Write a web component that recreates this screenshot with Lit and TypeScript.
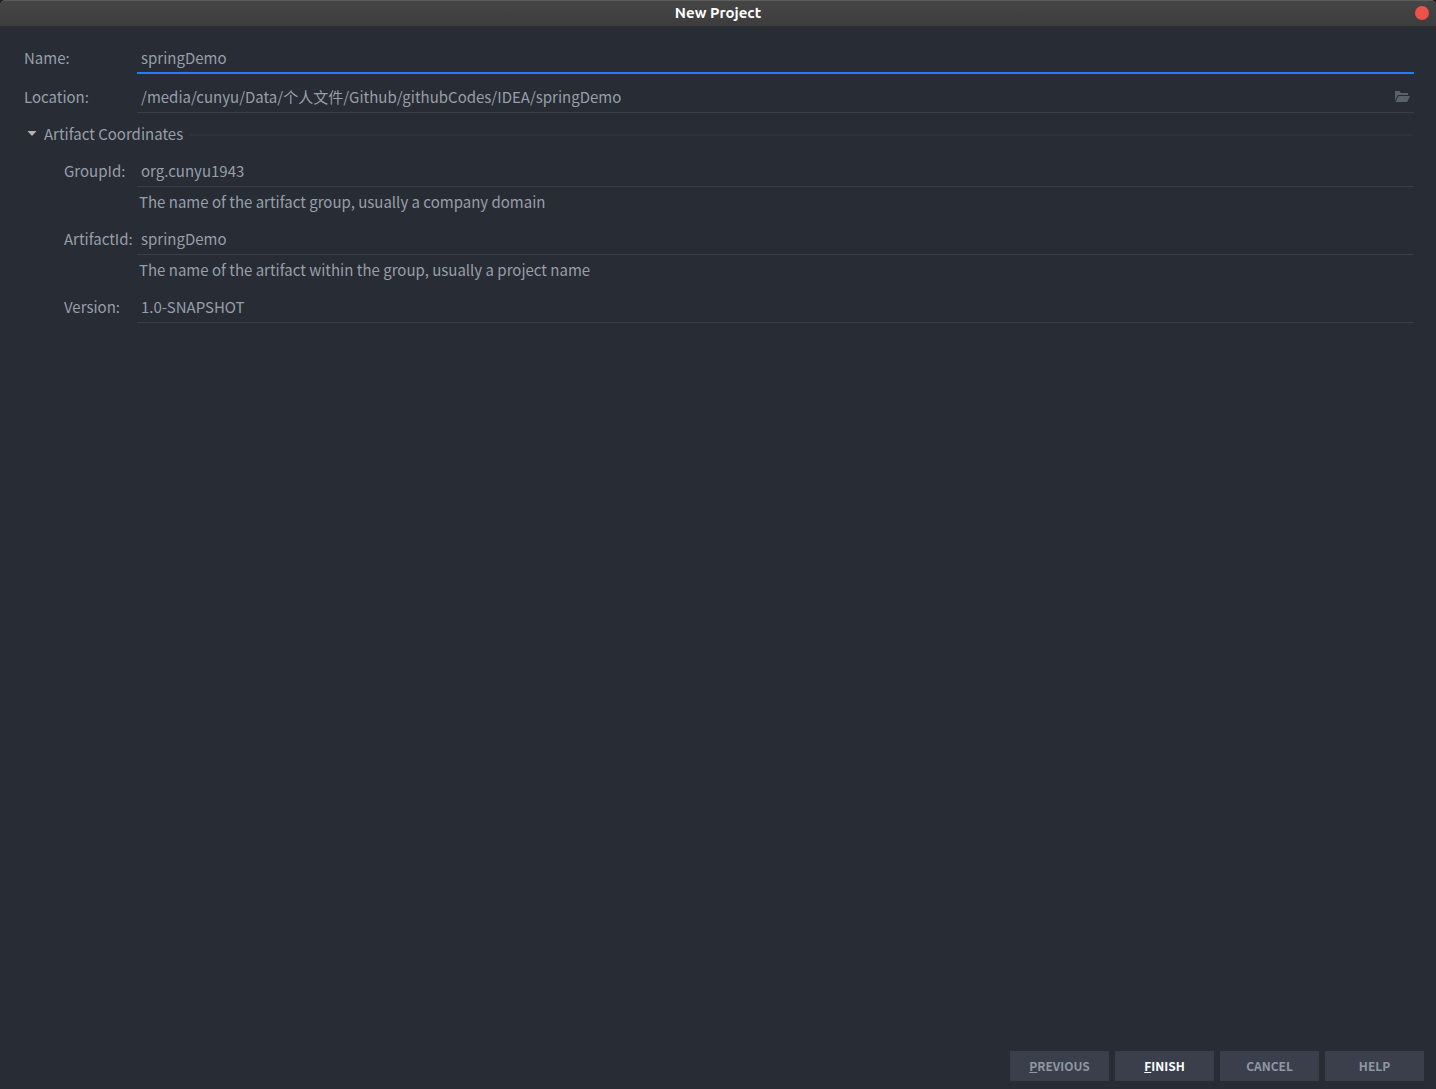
import { LitElement, html, css, nothing } from "lit";
import { customElement, property, state } from "lit/decorators.js";

interface Field {
  id: string;
  label: string;
  value: string;
  hint?: string;
}

const projectFields: Field[] = [
  { id: "name", label: "Name:", value: "springDemo" },
  { id: "location", label: "Location:", value: "/media/cunyu/Data/个人文件/Github/githubCodes/IDEA/springDemo" },
];

const artifactFields: Field[] = [
  { id: "group", label: "GroupId:", value: "org.cunyu1943", hint: "The name of the artifact group, usually a company domain" },
  { id: "artifact", label: "ArtifactId:", value: "springDemo", hint: "The name of the artifact within the group, usually a project name" },
  { id: "version", label: "Version:", value: "1.0-SNAPSHOT" },
];

@customElement("title-bar")
class TitleBar extends LitElement {
  static styles = css`
    :host {
      display: block;
      background: #1c1c1c;
    }
    .bar {
      display: grid;
      grid-template-columns: 1fr auto 1fr;
      align-items: center;
      height: 26px;
      box-sizing: border-box;
      padding: 0 7px 1px;
      border-top: 1px solid #5c5c5a;
      border-radius: 5px 5px 0 0;
      background: linear-gradient(#454545, #3d3d3d);
    }
    .title {
      grid-column: 2;
      margin: 0;
      color: #ffffff;
      font: bold 15px/24px "Ubuntu", "Noto Sans", sans-serif;
    }
    .close {
      justify-self: end;
      width: 14px;
      height: 14px;
      padding: 0;
      border: 0;
      border-radius: 50%;
      background: #ea524a;
    }
  `;

  @property() heading = "";

  render() {
    return html`
      <header class="bar">
        <h1 class="title">${this.heading}</h1>
        <button class="close" type="button" aria-label="Close"></button>
      </header>
    `;
  }
}

@customElement("app-root")
class AppRoot extends LitElement {
  static styles = css`
    :host {
      display: flex;
      flex-direction: column;
      min-height: 100vh;
      background: #282c34;
      color: #979faa;
      font: 15px/20px "Noto Sans CJK SC", sans-serif;
    }
    .form {
      flex: 1;
      display: flex;
      flex-direction: column;
      padding: 17px 22px 0 24px;
    }
    .group {
      display: grid;
      grid-template-columns: 113px 1fr;
      row-gap: 8px;
    }
    .nested {
      row-gap: 6px;
      grid-template-columns: 73px 1fr;
      padding-left: 40px;
    }
    .label {
      align-self: center;
      padding-bottom: 1px;
    }
    .field {
      display: flex;
      align-items: center;
      height: 31px;
      box-sizing: border-box;
      padding: 0 4px 1px;
      border-bottom: 1px solid #3a3f4b;
    }
    .field.active {
      padding-bottom: 0;
      border-bottom: 2px solid #2979ff;
    }
    .input {
      flex: 1;
      min-width: 0;
      height: 24px;
      padding: 0;
      border: 0;
      outline: 0;
      background: none;
      color: inherit;
      font: inherit;
    }
    .browse {
      display: flex;
      padding: 0;
      border: 0;
      background: none;
    }
    .hint {
      grid-column: 2;
      margin: -6px 0 0 2px;
      padding: 5px 0 6px;
    }
    .section {
      display: flex;
      align-items: center;
      gap: 6px;
      height: 42px;
      padding: 0 2px 1px 0;
    }
    .toggle {
      display: flex;
      align-items: center;
      gap: 7px;
      padding: 0 0 0 3px;
      border: 0;
      background: none;
      color: inherit;
      font: inherit;
    }
    .rule {
      flex: 1;
      height: 2px;
      margin-top: 2px;
      background: #2e323c;
    }
    .actions {
      display: flex;
      justify-content: flex-end;
      gap: 6px;
      padding: 8px 12px;
    }
    .action {
      min-width: 99px;
      height: 30px;
      padding: 0 12px;
      border: 0;
      background: #3a3f4b;
      color: #8f97a4;
      font: bold 12px/20px "Noto Sans CJK SC", sans-serif;
    }
    .primary {
      color: #ffffff;
    }
    .key {
      text-decoration: underline;
      text-underline-offset: 1px;
    }
  `;

  @state() private active = "name";
  @state() private expanded = true;

  private renderField(field: Field) {
    return html`
      <label class="label" for=${field.id}>${field.label}</label>
      <div class="field ${this.active === field.id ? "active" : ""}">
        <input class="input" id=${field.id} type="text" spellcheck="false" .value=${field.value}
          @focus=${() => (this.active = field.id)} />
        ${field.id === "location"
          ? html`<button class="browse" type="button" aria-label="Browse">
              <svg width="16" height="16" viewBox="0 0 16 16" fill="#59626b">
                <path d="M1 2h4.500l1.500 2H14V6H4L1 11.500z" />
                <path d="M4.600 7H16l-2.800 6H1.400z" />
              </svg>
            </button>`
          : nothing}
      </div>
      ${field.hint ? html`<div class="hint">${field.hint}</div>` : nothing}
    `;
  }

  render() {
    return html`
      <title-bar heading="New Project"></title-bar>
      <main class="form">
        <div class="group">${projectFields.map((f) => this.renderField(f))}</div>
        <div class="section">
          <button class="toggle" type="button" aria-expanded=${this.expanded}
            @click=${() => (this.expanded = !this.expanded)}>
            <svg width="10" height="6" viewBox="0 0 10 6" fill="#b4b4b4"><path d="M0.500 0h9L5 5z" /></svg>
            Artifact Coordinates
          </button>
          <div class="rule"></div>
        </div>
        ${this.expanded
          ? html`<div class="group nested">${artifactFields.map((f) => this.renderField(f))}</div>`
          : nothing}
      </main>
      <footer class="actions">
        <button class="action" type="button"><span class="key">P</span>REVIOUS</button>
        <button class="action primary" type="button"><span class="key">F</span>INISH</button>
        <button class="action" type="button">CANCEL</button>
        <button class="action" type="button">HELP</button>
      </footer>
    `;
  }
}
